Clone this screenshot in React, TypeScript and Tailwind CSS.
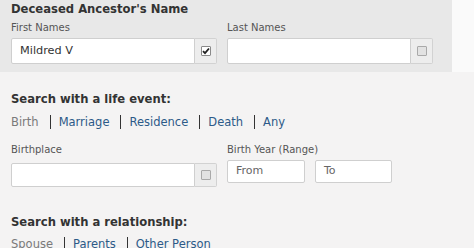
import React from "react";

function Check({ checked }: { checked?: boolean }) {
  return (
    <div className="flex w-[22px] shrink-0 items-center justify-center rounded-r-[2px] border border-l-0 border-[#d2d2d2] bg-[#ededed]">
      {checked ? (
        <div className="flex h-[10px] w-[10px] items-center justify-center rounded-[1px] border border-[#8a8a8a] bg-white">
          <svg width="8" height="8" viewBox="0 0 8 8">
            <path d="M1 4.2 L3 6.2 L7 1.5" fill="none" stroke="#222" strokeWidth="1.8" />
          </svg>
        </div>
      ) : (
        <div className="h-[10px] w-[10px] rounded-[1px] border border-[#a9a9a9] bg-[#e2e2e2]" />
      )}
    </div>
  );
}

function Field({ value, checked, h }: { value?: string; checked?: boolean; h: string }) {
  return (
    <div className={`flex w-[206px] ${h}`}>
      <div className="flex flex-1 items-center rounded-l-[2px] border border-[#cfcfcf] bg-white pl-[8px] text-[11.3px] text-[#333]">
        {value}
      </div>
      <Check checked={checked} />
    </div>
  );
}

function Links({ items }: { items: string[] }) {
  return (
    <div className="flex items-center text-[11.5px] leading-[14px]">
      {items.map((t, i) => (
        <React.Fragment key={t}>
          {i > 0 && <span className="ml-[11px] mr-[8px] h-[14px] w-[1px] bg-[#333]" />}
          <span className={i === 0 ? "text-[#7a7a7a]" : "text-[#2c5a88]"}>{t}</span>
        </React.Fragment>
      ))}
    </div>
  );
}

export default function App() {
  return (
    <div className="h-[248px] w-[474px] overflow-hidden bg-[#f4f3f3] font-['DejaVu_Sans',sans-serif]">
      <div className="flex bg-[#fafafa]">
        <div className="h-[72px] w-[452px] bg-[#e8e8e8] pl-[11px] pt-[2px]">
          <div className="text-[11.6px] font-bold leading-[14px] text-[#333]">Deceased Ancestor's Name</div>
          <div className="mt-[6px] flex gap-[10px]">
            <div className="flex flex-col">
              <div className="text-[10px] leading-[12px] text-[#555]">First Names</div>
              <div className="mt-[4px]">
                <Field value="Mildred V" checked h="h-[26px]" />
              </div>
            </div>
            <div className="flex flex-col">
              <div className="text-[10px] leading-[12px] text-[#555]">Last Names</div>
              <div className="mt-[4px]">
                <Field h="h-[26px]" />
              </div>
            </div>
          </div>
        </div>
      </div>

      <div className="pl-[11px] pt-[20px]">
        <div className="text-[11.6px] font-bold leading-[14px] text-[#333]">Search with a life event:</div>
        <div className="mt-[9px]">
          <Links items={["Birth", "Marriage", "Residence", "Death", "Any"]} />
        </div>
        <div className="mt-[15px] flex gap-[10px]">
          <div className="flex flex-col">
            <div className="text-[10px] leading-[12px] text-[#555]">Birthplace</div>
            <div className="mt-[7px]">
              <Field h="h-[24px]" />
            </div>
          </div>
          <div className="flex flex-col">
            <div className="text-[10px] leading-[12px] text-[#555]">Birth Year (Range)</div>
            <div className="mt-[4px] flex gap-[10px]">
              <div className="flex h-[23px] w-[78px] items-center rounded-[2px] border border-[#cfcfcf] bg-white pl-[8px] text-[11px] text-[#666]">
                From
              </div>
              <div className="flex h-[23px] w-[77px] items-center rounded-[2px] border border-[#cfcfcf] bg-white pl-[8px] text-[11px] text-[#666]">
                To
              </div>
            </div>
          </div>
        </div>
        <div className="mt-[28px] text-[11.6px] font-bold leading-[14px] text-[#333]">Search with a relationship:</div>
        <div className="mt-[8px]">
          <Links items={["Spouse", "Parents", "Other Person"]} />
        </div>
      </div>
    </div>
  );
}
